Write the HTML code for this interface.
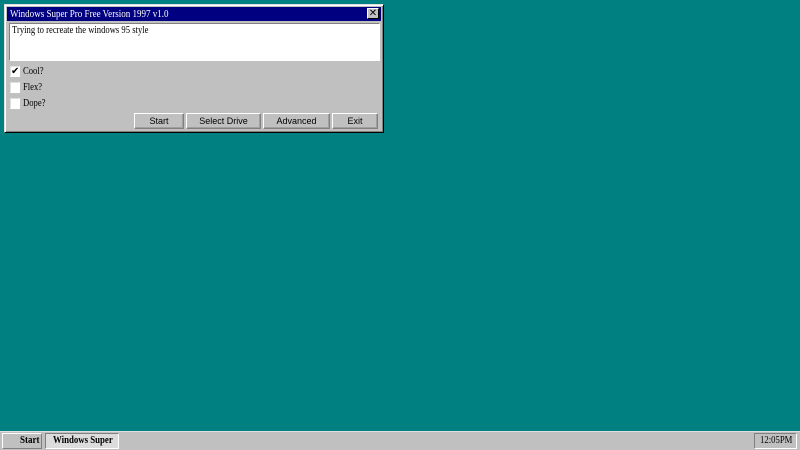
<!DOCTYPE html>
<html><head><style>
*{box-sizing:border-box;margin:0;padding:0}
body{width:800px;height:450px;background:#008080;position:relative;overflow:hidden;font-family:"Liberation Serif",serif;}
.s{display:inline-block;transform:scaleX(0.82);transform-origin:left center;white-space:nowrap}
.win{position:absolute;left:4px;top:4px;width:380px;height:129px;background:#c0c0c0;border:1px solid;border-color:#dfdfdf #000 #000 #dfdfdf;box-shadow:inset 1px 1px #fff,inset -1px -1px #808080}
.title{position:absolute;left:2px;top:2px;right:2px;height:14px;background:#000080;color:#fff;font-size:11px;line-height:14px;padding-left:3px}
.x{position:absolute;right:2px;top:1px;width:12px;height:11px;background:#c0c0c0;border:1px solid;border-color:#fff #000 #000 #fff;color:#000;font-family:"Liberation Sans",sans-serif;font-size:10px;line-height:9px;text-align:center}
.ta{position:absolute;left:4px;top:18px;width:371px;height:38px;background:#fff;border:1px solid;border-color:#808080 #fff #fff #808080;font-size:10.5px;padding:1px 2px;line-height:12px}
.cb{position:absolute;left:5px;font-size:10.5px;line-height:11px}
.cb i{display:inline-block;width:10px;height:11px;background:#fff;border:1px solid;border-color:#dfdfdf #fff #fff #dfdfdf;vertical-align:top;margin-right:3px;font-style:normal;font-size:10px;line-height:10px;text-align:center}
.btn{position:absolute;top:108px;height:16px;background:#c0c0c0;border:1px solid;border-color:#fff #808080 #808080 #fff;box-shadow:inset -1px -1px #a0a0a0;font-family:"Liberation Sans",sans-serif;font-size:9px;line-height:14px;text-align:center}
.tb{position:absolute;left:0;top:431px;width:800px;height:19px;background:#c0c0c0;border-top:1px solid #dfdfdf}
.tbb{position:absolute;top:1px;height:16px;border:1px solid;border-color:#fff #808080 #808080 #fff;font-size:10px;font-weight:bold;line-height:14px}
</style></head><body>
<div class="win">
<div class="title"><span class="s">Windows Super Pro Free Version 1997 v1.0</span><div class="x">✕</div></div>
<div class="ta"><span class="s">Trying to recreate the windows 95 style</span></div>
<div class="cb" style="top:61px"><i>✔</i><span class="s">Cool?</span></div>
<div class="cb" style="top:77px"><i></i><span class="s">Flex?</span></div>
<div class="cb" style="top:93px"><i></i><span class="s">Dope?</span></div>
<div class="btn" style="left:129px;width:50px">Start</div>
<div class="btn" style="left:181px;width:75px">Select Drive</div>
<div class="btn" style="left:258px;width:67px">Advanced</div>
<div class="btn" style="left:327px;width:46px">Exit</div>
</div>
<div class="tb">
<div class="tbb" style="left:2px;width:40px;padding-left:17px"><span class="s" style="transform:scaleX(0.9)">Start</span></div>
<div class="tbb" style="left:45px;width:74px;padding-left:7px;background:#dcdcdc;border-color:#808080 #fff #fff #808080"><span class="s" style="transform:scaleX(0.88)">Windows Super</span></div>
<div class="tbb" style="left:754px;width:43px;padding-left:5px;font-weight:normal;border-color:#808080 #fff #fff #808080"><span class="s" style="transform:scaleX(0.87)">12:05PM</span></div>
</div>
</body></html>
